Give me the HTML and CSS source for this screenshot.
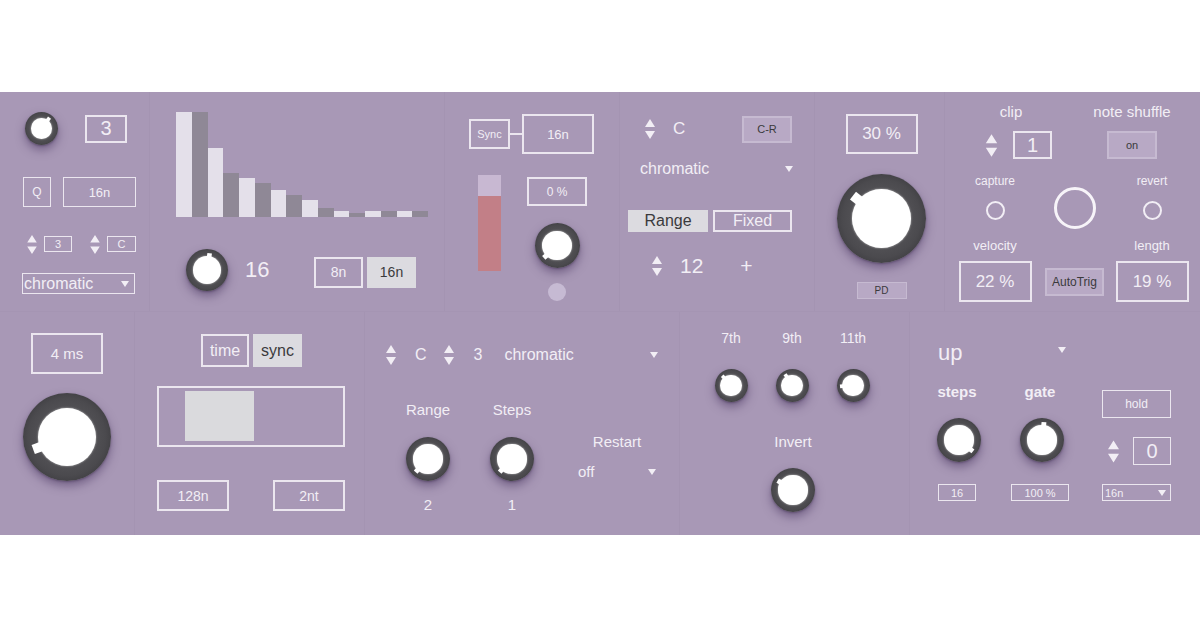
FILE: index.html
```html
<!DOCTYPE html>
<html>
<head>
<meta charset="utf-8">
<link rel="stylesheet" href="styles.css">
</head>
<body>
<div class="panel">
  <div class="row top">
    <section class="sec sec-a">
      <div class="a-r1"><div class="knob k33" style="--a:35deg"></div><div class="box a-num">3</div></div>
      <div class="a-r2"><div class="box a-q">Q</div><div class="box a-16n">16n</div></div>
      <div class="a-r3">
        <svg class="updn u-a" viewBox="0 0 10 22"><path d="M5 1L10 9H0Z M0 13H10L5 21Z"/></svg>
        <div class="box sm a-s1">3</div>
        <svg class="updn u-a u-a2" viewBox="0 0 10 22"><path d="M5 1L10 9H0Z M0 13H10L5 21Z"/></svg>
        <div class="box sm a-s2">C</div>
      </div>
      <div class="box a-dd"><span>chromatic</span><i class="tri"></i></div>
    </section>

    <section class="sec sec-b">
      <div class="bars">
        <div class="bar l" style="height:105px"></div>
        <div class="bar d" style="height:105px"></div>
        <div class="bar l" style="height:69px"></div>
        <div class="bar d" style="height:44px"></div>
        <div class="bar l" style="height:39px"></div>
        <div class="bar d" style="height:34px"></div>
        <div class="bar l" style="height:27px"></div>
        <div class="bar d" style="height:22px"></div>
        <div class="bar l" style="height:17px"></div>
        <div class="bar d" style="height:9px"></div>
        <div class="bar l" style="height:6px"></div>
        <div class="bar d" style="height:4px"></div>
        <div class="bar l" style="height:6px"></div>
        <div class="bar d" style="height:6px"></div>
        <div class="bar l" style="height:6px"></div>
        <div class="bar d" style="height:6px"></div>
      </div>
      <div class="b-row">
        <div class="knob k42" style="--a:8deg"></div>
        <span class="b-num">16</span>
        <div class="box b-btn">8n</div>
        <div class="box b-btn on b-btn2">16n</div>
      </div>
    </section>

    <section class="sec sec-c">
      <div class="c-r1">
        <div class="box c-sync">Sync</div><div class="c-line"></div><div class="box c-16n">16n</div>
      </div>
      <div class="c-r2">
        <div class="meter"><div class="meter-top"></div><div class="meter-fill"></div></div>
        <div class="c-col">
          <div class="box c-pct">0 %</div>
          <div class="knob k45 c-knob" style="--a:228deg"></div>
          <div class="c-dot"></div>
        </div>
      </div>
    </section>

    <section class="sec sec-d">
      <div class="d-r1">
        <svg class="updn u-d" viewBox="0 0 10 22"><path d="M5 1L10 9H0Z M0 13H10L5 21Z"/></svg>
        <span class="d-c">C</span>
        <div class="box lp d-cr">C-R</div>
      </div>
      <div class="d-r2"><span>chromatic</span><i class="tri"></i></div>
      <div class="d-r3"><div class="box on d-btn">Range</div><div class="box d-btn d-fixed">Fixed</div></div>
      <div class="d-r4">
        <svg class="updn u-d" viewBox="0 0 10 22"><path d="M5 1L10 9H0Z M0 13H10L5 21Z"/></svg>
        <span class="d-12">12</span>
        <span class="d-plus">+</span>
      </div>
    </section>

    <section class="sec sec-e">
      <div class="box e-pct">30 %</div>
      <div class="knob k89 e-knob" style="--a:-52deg"></div>
      <div class="box lp e-pd">PD</div>
    </section>

    <section class="sec sec-f">
      <div class="f-labels"><span class="f-clip">clip</span><span class="f-ns">note shuffle</span></div>
      <div class="f-r1">
        <svg class="updn u-f" viewBox="0 0 10 22"><path d="M5 1L10 9H0Z M0 13H10L5 21Z"/></svg>
        <div class="box f-one">1</div>
        <div class="box lp f-on">on</div>
      </div>
      <div class="f-cols">
        <div class="f-col f-col1">
          <span class="f-lbl">capture</span>
          <div class="ring f-small"></div>
          <span class="f-lbl2">velocity</span>
          <div class="box f-val">22 %</div>
        </div>
        <div class="f-col f-col2">
          <div class="ring f-big"></div>
          <div class="box lp f-auto">AutoTrig</div>
        </div>
        <div class="f-col f-col3">
          <span class="f-lbl">revert</span>
          <div class="ring f-small"></div>
          <span class="f-lbl2">length</span>
          <div class="box f-val">19 %</div>
        </div>
      </div>
    </section>
  </div>

  <div class="row bottom">
    <section class="sec sec-g">
      <div class="box g-ms">4 ms</div>
      <div class="knob k88 g-knob" style="--a:250deg"></div>
    </section>

    <section class="sec sec-h">
      <div class="h-r1"><div class="box h-btn">time</div><div class="box on h-btn h-sync">sync</div></div>
      <div class="h-rect"><div class="h-block"></div></div>
      <div class="h-r3"><div class="box h-val">128n</div><div class="box h-val">2nt</div></div>
    </section>

    <section class="sec sec-i">
      <div class="i-r1">
        <svg class="updn u-i" viewBox="0 0 10 22"><path d="M5 1L10 9H0Z M0 13H10L5 21Z"/></svg>
        <span class="i-c">C</span>
        <svg class="updn u-i i-a2" viewBox="0 0 10 22"><path d="M5 1L10 9H0Z M0 13H10L5 21Z"/></svg>
        <span class="i-3">3</span>
        <span class="i-chr">chromatic</span>
        <i class="tri i-tri"></i>
      </div>
      <div class="i-r2">
        <div class="i-col">
          <span class="i-lbl">Range</span>
          <div class="knob k44 i-knob" style="--a:222deg"></div>
          <span class="i-val">2</span>
        </div>
        <div class="i-col i-col2">
          <span class="i-lbl">Steps</span>
          <div class="knob k44 i-knob" style="--a:222deg"></div>
          <span class="i-val">1</span>
        </div>
        <div class="i-restart">
          <span class="i-rl">Restart</span>
          <div class="i-off"><span>off</span><i class="tri"></i></div>
        </div>
      </div>
    </section>

    <section class="sec sec-j">
      <div class="j-top">
        <div class="j-col"><span class="j-lbl">7th</span><div class="knob k33 j-knob" style="--a:-45deg"></div></div>
        <div class="j-col"><span class="j-lbl">9th</span><div class="knob k33 j-knob" style="--a:-35deg"></div></div>
        <div class="j-col"><span class="j-lbl">11th</span><div class="knob k33 j-knob" style="--a:-95deg"></div></div>
      </div>
      <div class="j-inv">
        <span class="j-lbl">Invert</span>
        <div class="knob k44 j-knob2" style="--a:-60deg"></div>
      </div>
    </section>

    <section class="sec sec-k">
      <div class="k-r1"><span class="k-up">up</span><i class="tri k-tri"></i></div>
      <div class="k-cols">
        <div class="k-col k-col1">
          <span class="k-lbl">steps</span>
          <div class="knob k44 k-knob" style="--a:128deg"></div>
          <div class="box k-small">16</div>
        </div>
        <div class="k-col k-col2">
          <span class="k-lbl">gate</span>
          <div class="knob k44 k-knob" style="--a:5deg"></div>
          <div class="box k-small k-pct">100 %</div>
        </div>
        <div class="k-col3">
          <div class="box k-hold">hold</div>
          <div class="k-num">
            <svg class="updn u-k" viewBox="0 0 10 22"><path d="M5 1L10 9H0Z M0 13H10L5 21Z"/></svg>
            <div class="box k-zero">0</div>
          </div>
          <div class="box k-dd"><span>16n</span><i class="tri"></i></div>
        </div>
      </div>
    </section>
  </div>
</div>
</body>
</html>
```

FILE: styles.css
```css
html, body {
  margin: 0;
  padding: 0;
  background: #ffffff;
}

body {
  font-family: "Liberation Sans", Arial, sans-serif;
  color: #f2eef5;
}

.panel {
  margin-top: 92px;
  height: 443px;
  background: #a898b6;
  display: flex;
  flex-direction: column;
}

.row {
  display: flex;
}

.row.top {
  height: 220px;
  border-bottom: 1px solid #a595b3;
  box-sizing: border-box;
}

.row.bottom {
  height: 223px;
}

.sec {
  box-sizing: border-box;
  border-right: 1px solid #a494b2;
  display: flex;
  flex-direction: column;
}

.sec:last-child {
  border-right: none;
}

/* generic */
.box {
  box-sizing: border-box;
  border: 2px solid #ebe6ef;
  color: #f2eef5;
  display: flex;
  align-items: center;
  justify-content: center;
  flex: none;
}

.box.on {
  background: #dcdbe0;
  border-color: #dcdbe0;
  color: #3a3a3c;
}

.box.lp {
  background: #b8a9c5;
  border-color: #c6bad1;
  color: #3a3a3c;
}

.tri {
  display: inline-block;
  width: 0;
  height: 0;
  border-left: 4px solid transparent;
  border-right: 4px solid transparent;
  border-top: 6px solid #f2eef5;
  flex: none;
}

.updn {
  fill: #f2eef5;
  flex: none;
}

.knob {
  position: relative;
  border-radius: 50%;
  flex: none;
  background: radial-gradient(circle, #636266 0%, #4b4a4e 62%, #2b2a2e 100%);
  box-shadow: 0 5px 10px rgba(65, 45, 90, 0.5), 0 1px 2px rgba(40, 30, 50, 0.4);
}

.knob::before {
  content: "";
  position: absolute;
  inset: 17%;
  border-radius: 50%;
  background: #ffffff;
  box-shadow: 0 0 2px rgba(255, 255, 255, 0.7);
}

.knob::after {
  content: "";
  position: absolute;
  inset: 0;
  border-radius: 50%;
  transform: rotate(var(--a));
  background: linear-gradient(#ffffff, #ffffff) 50% 10% / 11% 14% no-repeat;
}

.k33 { width: 33px; height: 33px; }
.k42 { width: 42px; height: 42px; }
.k44 { width: 44px; height: 44px; }
.k45 { width: 45px; height: 45px; }
.k88 { width: 88px; height: 88px; }
.k89 { width: 89px; height: 89px; }

/* Section A */
.sec-a {
  width: 150px;
  padding-top: 20px;
}

.a-r1 {
  display: flex;
  align-items: center;
  gap: 27px;
  margin-left: 25px;
  height: 33px;
}

.a-num {
  width: 42px;
  height: 28px;
  font-size: 20px;
}

.a-r2 {
  display: flex;
  gap: 12px;
  margin: 32px 0 0 23px;
}

.a-q {
  width: 28px;
  height: 30px;
  font-size: 12px;
  border-width: 1.5px;
}

.a-16n {
  width: 73px;
  height: 30px;
  font-size: 13px;
  border-width: 1.5px;
}

.a-r3 {
  display: flex;
  align-items: center;
  height: 22px;
  margin: 26px 0 0 27px;
}

.u-a {
  width: 10px;
  height: 21px;
}

.sm {
  height: 16px;
  font-size: 11px;
  border-width: 1.5px;
}

.a-s1 {
  width: 28px;
  margin-left: 7px;
}

.u-a2 {
  margin-left: 18px;
}

.a-s2 {
  width: 29px;
  margin-left: 7px;
}

.a-dd {
  width: 113px;
  height: 21px;
  margin: 18px 0 0 22px;
  border-width: 1.5px;
  justify-content: space-between;
  padding: 0 5px 0 1px;
  font-size: 16px;
}

/* Section B */
.sec-b {
  width: 295px;
  padding-top: 20px;
}

.bars {
  display: flex;
  align-items: flex-end;
  width: 252px;
  height: 105px;
  margin-left: 26px;
}

.bar {
  flex: 1;
}

.bar.l {
  background: #e4e0ea;
}

.bar.d {
  background: #8f8896;
}

.b-row {
  display: flex;
  align-items: center;
  height: 42px;
  margin: 32px 0 0 36px;
}

.b-num {
  width: 69px;
  margin-left: 17px;
  font-size: 22px;
}

.b-btn {
  width: 49px;
  height: 31px;
  font-size: 14px;
  margin-top: 4px;
}

.b-btn2 {
  margin-left: 4px;
}

/* Section C */
.sec-c {
  width: 175px;
  padding-top: 22px;
}

.c-r1 {
  display: flex;
  align-items: center;
  margin-left: 24px;
}

.c-sync {
  width: 41px;
  height: 30px;
  font-size: 11px;
}

.c-line {
  width: 12px;
  height: 2px;
  background: #ebe6ef;
}

.c-16n {
  width: 72px;
  height: 40px;
  font-size: 13px;
  border-width: 2.5px;
}

.c-r2 {
  display: flex;
  align-items: flex-start;
  gap: 26px;
  margin: 21px 0 0 33px;
}

.meter {
  width: 23px;
  height: 96px;
  display: flex;
  flex-direction: column;
}

.meter-top {
  height: 21px;
  background: #c8b8d2;
}

.meter-fill {
  flex: 1;
  background: #c27f87;
}

.c-col {
  width: 60px;
  margin-top: 2px;
  display: flex;
  flex-direction: column;
  align-items: center;
}

.c-pct {
  width: 60px;
  height: 29px;
  font-size: 12px;
}

.c-knob {
  margin-top: 17px;
}

.c-dot {
  width: 18px;
  height: 18px;
  border-radius: 50%;
  background: #c6bad3;
  margin-top: 15px;
}

/* Section D */
.sec-d {
  width: 195px;
  padding-top: 23px;
}

.d-r1 {
  display: flex;
  align-items: center;
  height: 28px;
  margin: 0 22px 0 25px;
}

.u-d {
  width: 10px;
  height: 22px;
}

.d-c {
  margin-left: 18px;
  font-size: 17px;
}

.d-cr {
  margin-left: auto;
  width: 50px;
  height: 27px;
  font-size: 11px;
  color: #f2eef5;
}

.d-r2 {
  display: flex;
  align-items: center;
  justify-content: space-between;
  height: 20px;
  width: 153px;
  margin: 16px 0 0 20px;
  font-size: 16px;
}

.d-r3 {
  display: flex;
  gap: 5px;
  margin: 31px 0 0 8px;
}

.d-btn {
  width: 80px;
  height: 22px;
  font-size: 16px;
}

.d-fixed {
  width: 79px;
}

.d-r4 {
  display: flex;
  align-items: center;
  height: 22px;
  margin: 23px 0 0 32px;
}

.d-12 {
  margin-left: 18px;
  font-size: 21px;
}

.d-plus {
  margin-left: 37px;
  font-size: 21px;
}

/* Section E */
.sec-e {
  width: 130px;
  padding: 22px 0 0 4px;
  align-items: center;
}

.e-pct {
  width: 72px;
  height: 40px;
  font-size: 17px;
}

.e-knob {
  margin-top: 20px;
}

.e-pd {
  width: 50px;
  height: 17px;
  font-size: 10px;
  margin-top: 19px;
  border-width: 1.5px;
}

/* Section F */
.sec-f {
  width: 255px;
  padding-top: 11px;
}

.f-labels {
  display: flex;
  margin-left: 36px;
  font-size: 15px;
  line-height: 18px;
}

.f-clip {
  width: 60px;
  text-align: center;
}

.f-ns {
  width: 110px;
  margin-left: 36px;
  text-align: center;
}

.f-r1 {
  display: flex;
  align-items: center;
  height: 28px;
  margin: 10px 0 0 40px;
}

.u-f {
  width: 13px;
  height: 25px;
}

.f-one {
  width: 39px;
  height: 28px;
  margin-left: 15px;
  font-size: 20px;
}

.f-on {
  width: 50px;
  height: 28px;
  margin-left: 55px;
  font-size: 11px;
}

.f-cols {
  display: flex;
  align-items: flex-start;
  margin-top: 15px;
}

.f-col {
  display: flex;
  flex-direction: column;
  align-items: center;
}

.f-col1 {
  width: 100px;
}

.f-col2 {
  width: 59px;
}

.f-col3 {
  width: 96px;
}

.f-lbl {
  font-size: 12px;
  line-height: 14px;
}

.ring {
  box-sizing: border-box;
  border-radius: 50%;
  flex: none;
}

.f-small {
  width: 19px;
  height: 19px;
  border: 2px solid #f2eef5;
  margin-top: 13px;
}

.f-big {
  width: 42px;
  height: 42px;
  border: 3.5px solid #f7f4f9;
  margin-top: 13px;
}

.f-lbl2 {
  font-size: 13px;
  line-height: 15px;
  margin-top: 18px;
}

.f-val {
  width: 73px;
  height: 41px;
  font-size: 17px;
  margin-top: 8px;
}

.f-auto {
  width: 59px;
  height: 28px;
  font-size: 12px;
  margin-top: 39px;
}

/* Section G */
.sec-g {
  width: 135px;
  padding-top: 21px;
  align-items: center;
}

.g-ms {
  width: 72px;
  height: 41px;
  font-size: 15px;
}

.g-knob {
  margin-top: 19px;
}

/* Section H */
.sec-h {
  width: 230px;
  padding-top: 22px;
}

.h-r1 {
  display: flex;
  gap: 4px;
  margin-left: 66px;
}

.h-btn {
  width: 48px;
  height: 33px;
  font-size: 16px;
}

.h-sync {
  width: 49px;
}

.h-rect {
  box-sizing: border-box;
  width: 188px;
  height: 61px;
  border: 2px solid #ebe6ef;
  margin: 19px 0 0 22px;
  padding: 3px 0 0 26px;
}

.h-block {
  width: 69px;
  height: 50px;
  background: #dadadd;
}

.h-r3 {
  display: flex;
  justify-content: space-between;
  width: 188px;
  margin: 33px 0 0 22px;
}

.h-val {
  width: 72px;
  height: 31px;
  font-size: 14px;
}

/* Section I */
.sec-i {
  width: 315px;
  padding-top: 31px;
}

.i-r1 {
  display: flex;
  align-items: center;
  height: 24px;
  width: 272px;
  margin-left: 21px;
  font-size: 16px;
}

.u-i {
  width: 10px;
  height: 24px;
}

.i-c {
  margin-left: 19px;
}

.i-a2 {
  margin-left: 17px;
}

.i-3 {
  margin-left: 20px;
}

.i-chr {
  margin-left: 22px;
}

.i-tri {
  margin-left: auto;
}

.i-r2 {
  display: flex;
  align-items: flex-start;
  margin: 34px 0 0 33px;
}

.i-col {
  width: 60px;
  display: flex;
  flex-direction: column;
  align-items: center;
}

.i-col2 {
  margin-left: 24px;
}

.i-lbl, .i-val {
  font-size: 15px;
  line-height: 18px;
}

.i-knob {
  margin-top: 18px;
}

.i-val {
  margin-top: 15px;
}

.i-restart {
  width: 80px;
  margin-left: 35px;
  display: flex;
  flex-direction: column;
  align-items: center;
  font-size: 15px;
  line-height: 18px;
}

.i-rl {
  margin-top: 32px;
}

.i-off {
  width: 78px;
  display: flex;
  align-items: center;
  justify-content: space-between;
  margin-top: 12px;
}

/* Section J */
.sec-j {
  width: 230px;
  padding-top: 17px;
}

.j-top {
  display: flex;
  gap: 1px;
  margin-left: 21px;
}

.j-col {
  width: 60px;
  display: flex;
  flex-direction: column;
  align-items: center;
}

.j-lbl {
  font-size: 14px;
  line-height: 18px;
}

.j-knob {
  margin-top: 22px;
}

.j-inv {
  width: 60px;
  margin: 31px 0 0 83px;
  display: flex;
  flex-direction: column;
  align-items: center;
}

.j-inv .j-lbl {
  font-size: 15px;
}

.j-knob2 {
  margin-top: 17px;
}

/* Section K */
.sec-k {
  width: 290px;
  padding-top: 28px;
}

.k-r1 {
  display: flex;
  align-items: center;
  height: 26px;
  width: 128px;
  margin-left: 28px;
}

.k-up {
  font-size: 22px;
}

.k-tri {
  margin: -6px 0 0 auto;
}

.k-cols {
  display: flex;
  align-items: flex-start;
  margin-top: 17px;
}

.k-col {
  display: flex;
  flex-direction: column;
  align-items: center;
}

.k-col1 {
  width: 94px;
}

.k-col2 {
  width: 72px;
}

.k-lbl {
  font-size: 15px;
  line-height: 18px;
  font-weight: bold;
}

.k-knob {
  margin: 17px 0 0 4px;
}

.k-small {
  width: 38px;
  height: 17px;
  font-size: 11px;
  margin-top: 22px;
  border-width: 1.5px;
}

.k-pct {
  width: 58px;
}

.k-col3 {
  width: 69px;
  margin: 7px 0 0 26px;
  display: flex;
  flex-direction: column;
}

.k-hold {
  width: 69px;
  height: 28px;
  font-size: 12px;
  border-width: 1.5px;
}

.k-num {
  display: flex;
  align-items: center;
  height: 28px;
  margin-top: 19px;
}

.u-k {
  width: 11px;
  height: 25px;
  margin-left: 6px;
}

.k-zero {
  width: 38px;
  height: 28px;
  margin-left: 14px;
  font-size: 20px;
  border-width: 1.5px;
}

.k-dd {
  width: 69px;
  height: 17px;
  margin-top: 19px;
  justify-content: space-between;
  padding: 0 4px 0 2px;
  font-size: 11px;
  border-width: 1.5px;
}
```
